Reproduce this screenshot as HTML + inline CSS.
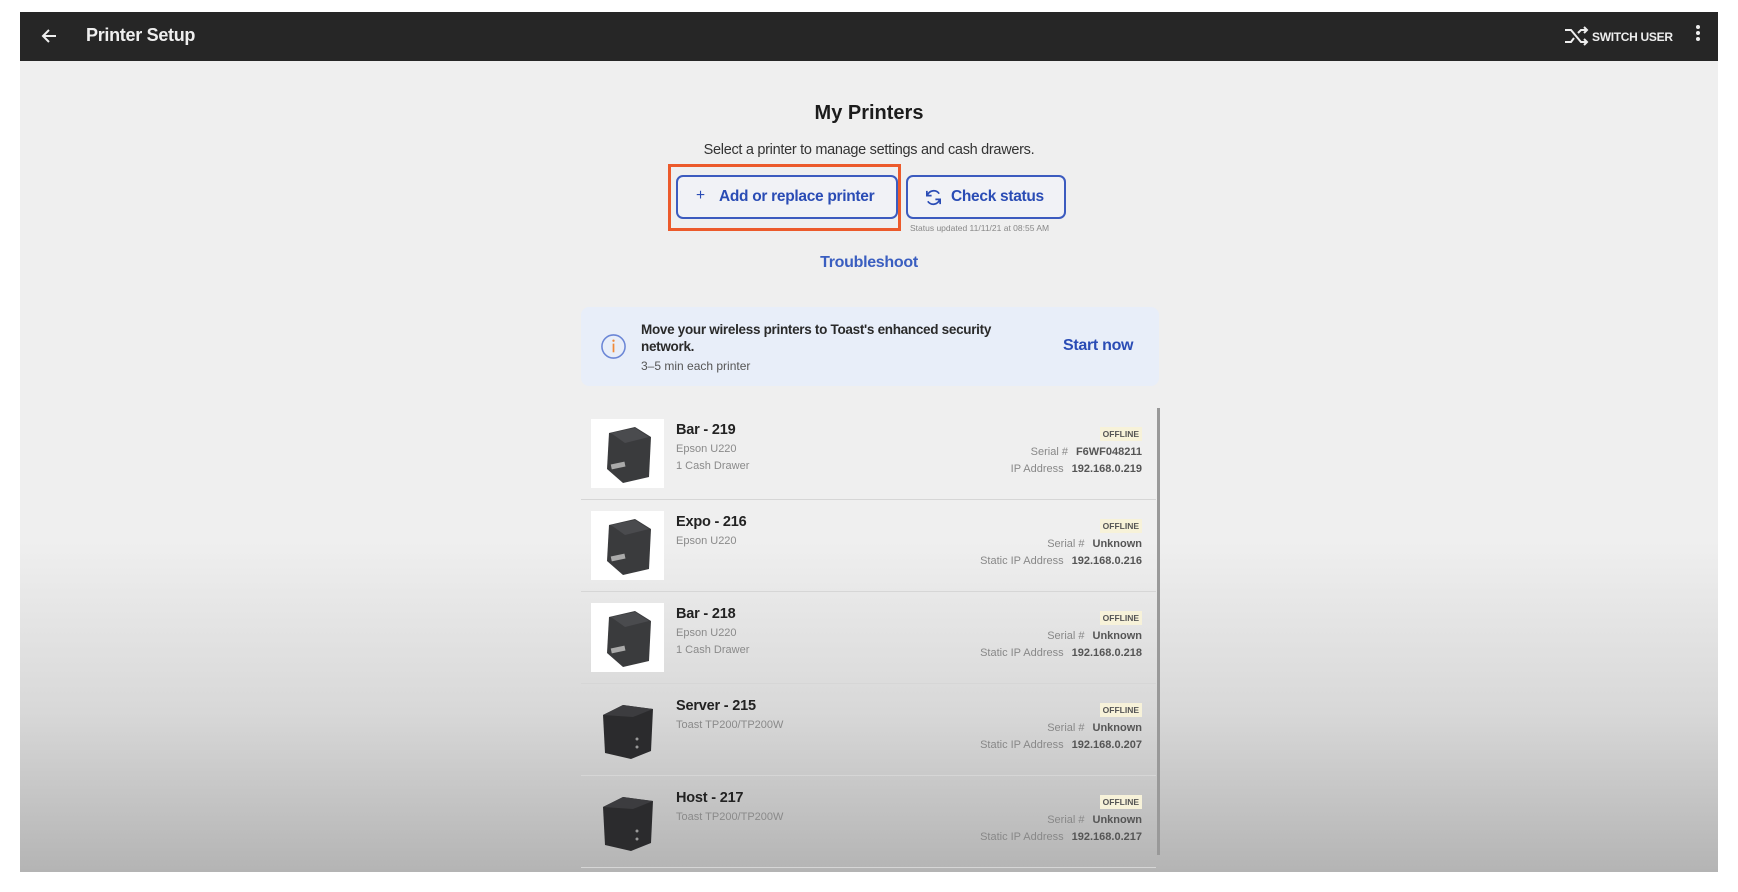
<!DOCTYPE html>
<html><head><meta charset="utf-8"><style>
*{margin:0;padding:0;box-sizing:border-box}
body{width:1738px;height:892px;background:#fff;font-family:"Liberation Sans",sans-serif;position:relative;overflow:hidden}
.app{position:absolute;left:20px;top:12px;width:1698px;height:860px;background:linear-gradient(#efefef 0,#efefef 530px,#d8d8d8 700px,#b4b4b4 860px)}
.bar{position:absolute;left:0;top:0;width:1698px;height:49px;background:#262626}
.a{position:absolute;white-space:nowrap}
.c{text-align:center;left:0;width:1698px}
.btn{position:absolute;border:2px solid #3c5bbf;border-radius:7px;color:#2a4cb5;font-weight:bold;font-size:15.5px;letter-spacing:-0.3px;background:#f1f2f6}
.row{position:absolute;left:561px;width:575px;height:92px;border-bottom:1px solid #d6d6d6}
.nm{position:absolute;left:95px;top:14px;font-size:14.5px;color:#222;font-weight:bold;letter-spacing:-0.2px}
.md{position:absolute;left:95px;font-size:11px;color:#8a8a8a}
.r{position:absolute;right:14px;font-size:11px;color:#888;text-align:right}
.r b{color:#555;margin-left:8px}
.off{position:absolute;right:14px;top:19px;font-size:8.5px;font-weight:bold;color:#555;background:#f7f2d9;padding:2px 3px}
.img{position:absolute;left:10px;top:11px;width:73px;height:69px}
</style></head><body>
<div class="app">
<div class="bar">
<svg class="a" style="left:20px;top:15px" width="18" height="18" viewBox="0 0 18 18"><path d="M16 9H3M9 3L3 9l6 6" stroke="#eee" stroke-width="2" fill="none"/></svg>
<div class="a" style="left:66px;top:13px;color:#eee;font-size:18px;font-weight:bold;letter-spacing:-0.3px">Printer Setup</div>
<svg class="a" style="left:1544px;top:13px" width="26" height="22" viewBox="0 0 26 22"><path d="M1 5h6l10 12h6M1 17h6l3-4M14 8l3-3h6M20 2l3 3-3 3M20 14l3 3-3 3" stroke="#eee" stroke-width="2" fill="none"/></svg>
<div class="a" style="left:1572px;top:18px;color:#eee;font-size:12px;font-weight:bold;letter-spacing:-0.3px">SWITCH USER</div>
<div class="a" style="left:1676px;top:13px;width:4px"><div style="width:4px;height:4px;background:#eee;border-radius:2px;margin-bottom:2px"></div><div style="width:4px;height:4px;background:#eee;border-radius:2px;margin-bottom:2px"></div><div style="width:4px;height:4px;background:#eee;border-radius:2px"></div></div>
</div>
<div class="a c" style="top:90px;font-size:20px;font-weight:bold;color:#1c1c1c">My Printers</div>
<div class="a c" style="top:130px;font-size:14.5px;color:#333;letter-spacing:-0.3px">Select a printer to manage settings and cash drawers.</div>
<div class="a" style="left:648px;top:152px;width:233px;height:67px;border:3px solid #ec5a2b"></div>
<div class="btn" style="left:656px;top:163px;width:222px;height:44px"><span class="a" style="left:18px;top:10px;font-weight:normal">+</span><span class="a" style="left:41px;top:11px">Add or replace printer</span></div>
<div class="btn" style="left:886px;top:163px;width:160px;height:44px"><svg class="a" style="left:16px;top:11px" width="19" height="19" viewBox="0 0 20 20"><path d="M16 6A7 7 0 0 0 3.5 8M4 14a7 7 0 0 0 12.5-2M3 3v5h5M17 17v-5h-5" stroke="#2a4cb5" stroke-width="1.8" fill="none"/></svg><span class="a" style="left:43px;top:11px">Check status</span></div>
<div class="a" style="left:890px;top:211px;font-size:8.5px;color:#888">Status updated 11/11/21 at 08:55 AM</div>
<div class="a c" style="top:242px;font-size:16px;font-weight:bold;color:#3a5ec0;letter-spacing:-0.3px">Troubleshoot</div>
<div class="a" style="left:561px;top:295px;width:578px;height:79px;background:#e8eef9;border-radius:8px">
<svg class="a" style="left:19px;top:26px" width="27" height="27" viewBox="0 0 28 28"><circle cx="14" cy="14" r="12" stroke="#6b86d6" stroke-width="1.6" fill="none"/><path d="M14 11v9" stroke="#f08a3a" stroke-width="1.8"/><circle cx="14" cy="8" r="1.2" fill="#f08a3a"/></svg>
<div class="a" style="left:60px;top:14px;font-size:13.5px;font-weight:bold;color:#2a2a2a;line-height:17px;letter-spacing:-0.3px">Move your wireless printers to Toast's enhanced security<br>network.</div>
<div class="a" style="left:60px;top:52px;font-size:12px;color:#555">3–5 min each printer</div>
<div class="a" style="left:482px;top:30px;font-size:16px;font-weight:bold;color:#2a4cb5;letter-spacing:-0.3px">Start now</div>
</div>
<div class="a" style="left:1137px;top:396px;width:3px;height:447px;background:#999"></div>

<div class="row" style="top:396px">
<svg class="img" viewBox="0 0 73 69"><rect width="73" height="69" fill="#fff"/><path d="M18 14l26-6 16 10-2 40-26 6-16-14z" fill="#3a3b3d"/><path d="M20 14l24-5 14 9-24 6z" fill="#4a4b4e"/><rect x="20" y="44" width="14" height="5" fill="#aaa" transform="rotate(-12 27 46)"/></svg>
<div class="nm">Bar - 219</div><div class="md" style="top:35px">Epson U220</div><div class="md" style="top:52px">1 Cash Drawer</div>
<div class="off">OFFLINE</div><div class="r" style="top:38px">Serial #<b>F6WF048211</b></div><div class="r" style="top:55px">IP Address<b>192.168.0.219</b></div>
</div>
<div class="row" style="top:488px">
<svg class="img" viewBox="0 0 73 69"><rect width="73" height="69" fill="#fff"/><path d="M18 14l26-6 16 10-2 40-26 6-16-14z" fill="#3a3b3d"/><path d="M20 14l24-5 14 9-24 6z" fill="#4a4b4e"/><rect x="20" y="44" width="14" height="5" fill="#aaa" transform="rotate(-12 27 46)"/></svg>
<div class="nm">Expo - 216</div><div class="md" style="top:35px">Epson U220</div>
<div class="off">OFFLINE</div><div class="r" style="top:38px">Serial #<b>Unknown</b></div><div class="r" style="top:55px">Static IP Address<b>192.168.0.216</b></div>
</div>
<div class="row" style="top:580px">
<svg class="img" viewBox="0 0 73 69"><rect width="73" height="69" fill="#fff"/><path d="M18 14l26-6 16 10-2 40-26 6-16-14z" fill="#3a3b3d"/><path d="M20 14l24-5 14 9-24 6z" fill="#4a4b4e"/><rect x="20" y="44" width="14" height="5" fill="#aaa" transform="rotate(-12 27 46)"/></svg>
<div class="nm">Bar - 218</div><div class="md" style="top:35px">Epson U220</div><div class="md" style="top:52px">1 Cash Drawer</div>
<div class="off">OFFLINE</div><div class="r" style="top:38px">Serial #<b>Unknown</b></div><div class="r" style="top:55px">Static IP Address<b>192.168.0.218</b></div>
</div>
<div class="row" style="top:672px">
<svg class="img" viewBox="0 0 73 69"><path d="M12 20l20-10 30 4-2 42-20 8-26-6z" fill="#2b2b2d"/><path d="M12 20l20-10 30 4-20 8z" fill="#3c3c3f"/><circle cx="46" cy="44" r="1.5" fill="#999"/><circle cx="46" cy="52" r="1.5" fill="#999"/></svg>
<div class="nm">Server - 215</div><div class="md" style="top:35px">Toast TP200/TP200W</div>
<div class="off">OFFLINE</div><div class="r" style="top:38px">Serial #<b>Unknown</b></div><div class="r" style="top:55px">Static IP Address<b>192.168.0.207</b></div>
</div>
<div class="row" style="top:764px">
<svg class="img" viewBox="0 0 73 69"><path d="M12 20l20-10 30 4-2 42-20 8-26-6z" fill="#2b2b2d"/><path d="M12 20l20-10 30 4-20 8z" fill="#3c3c3f"/><circle cx="46" cy="44" r="1.5" fill="#999"/><circle cx="46" cy="52" r="1.5" fill="#999"/></svg>
<div class="nm">Host - 217</div><div class="md" style="top:35px">Toast TP200/TP200W</div>
<div class="off">OFFLINE</div><div class="r" style="top:38px">Serial #<b>Unknown</b></div><div class="r" style="top:55px">Static IP Address<b>192.168.0.217</b></div>
</div>
</div>
</body></html>
